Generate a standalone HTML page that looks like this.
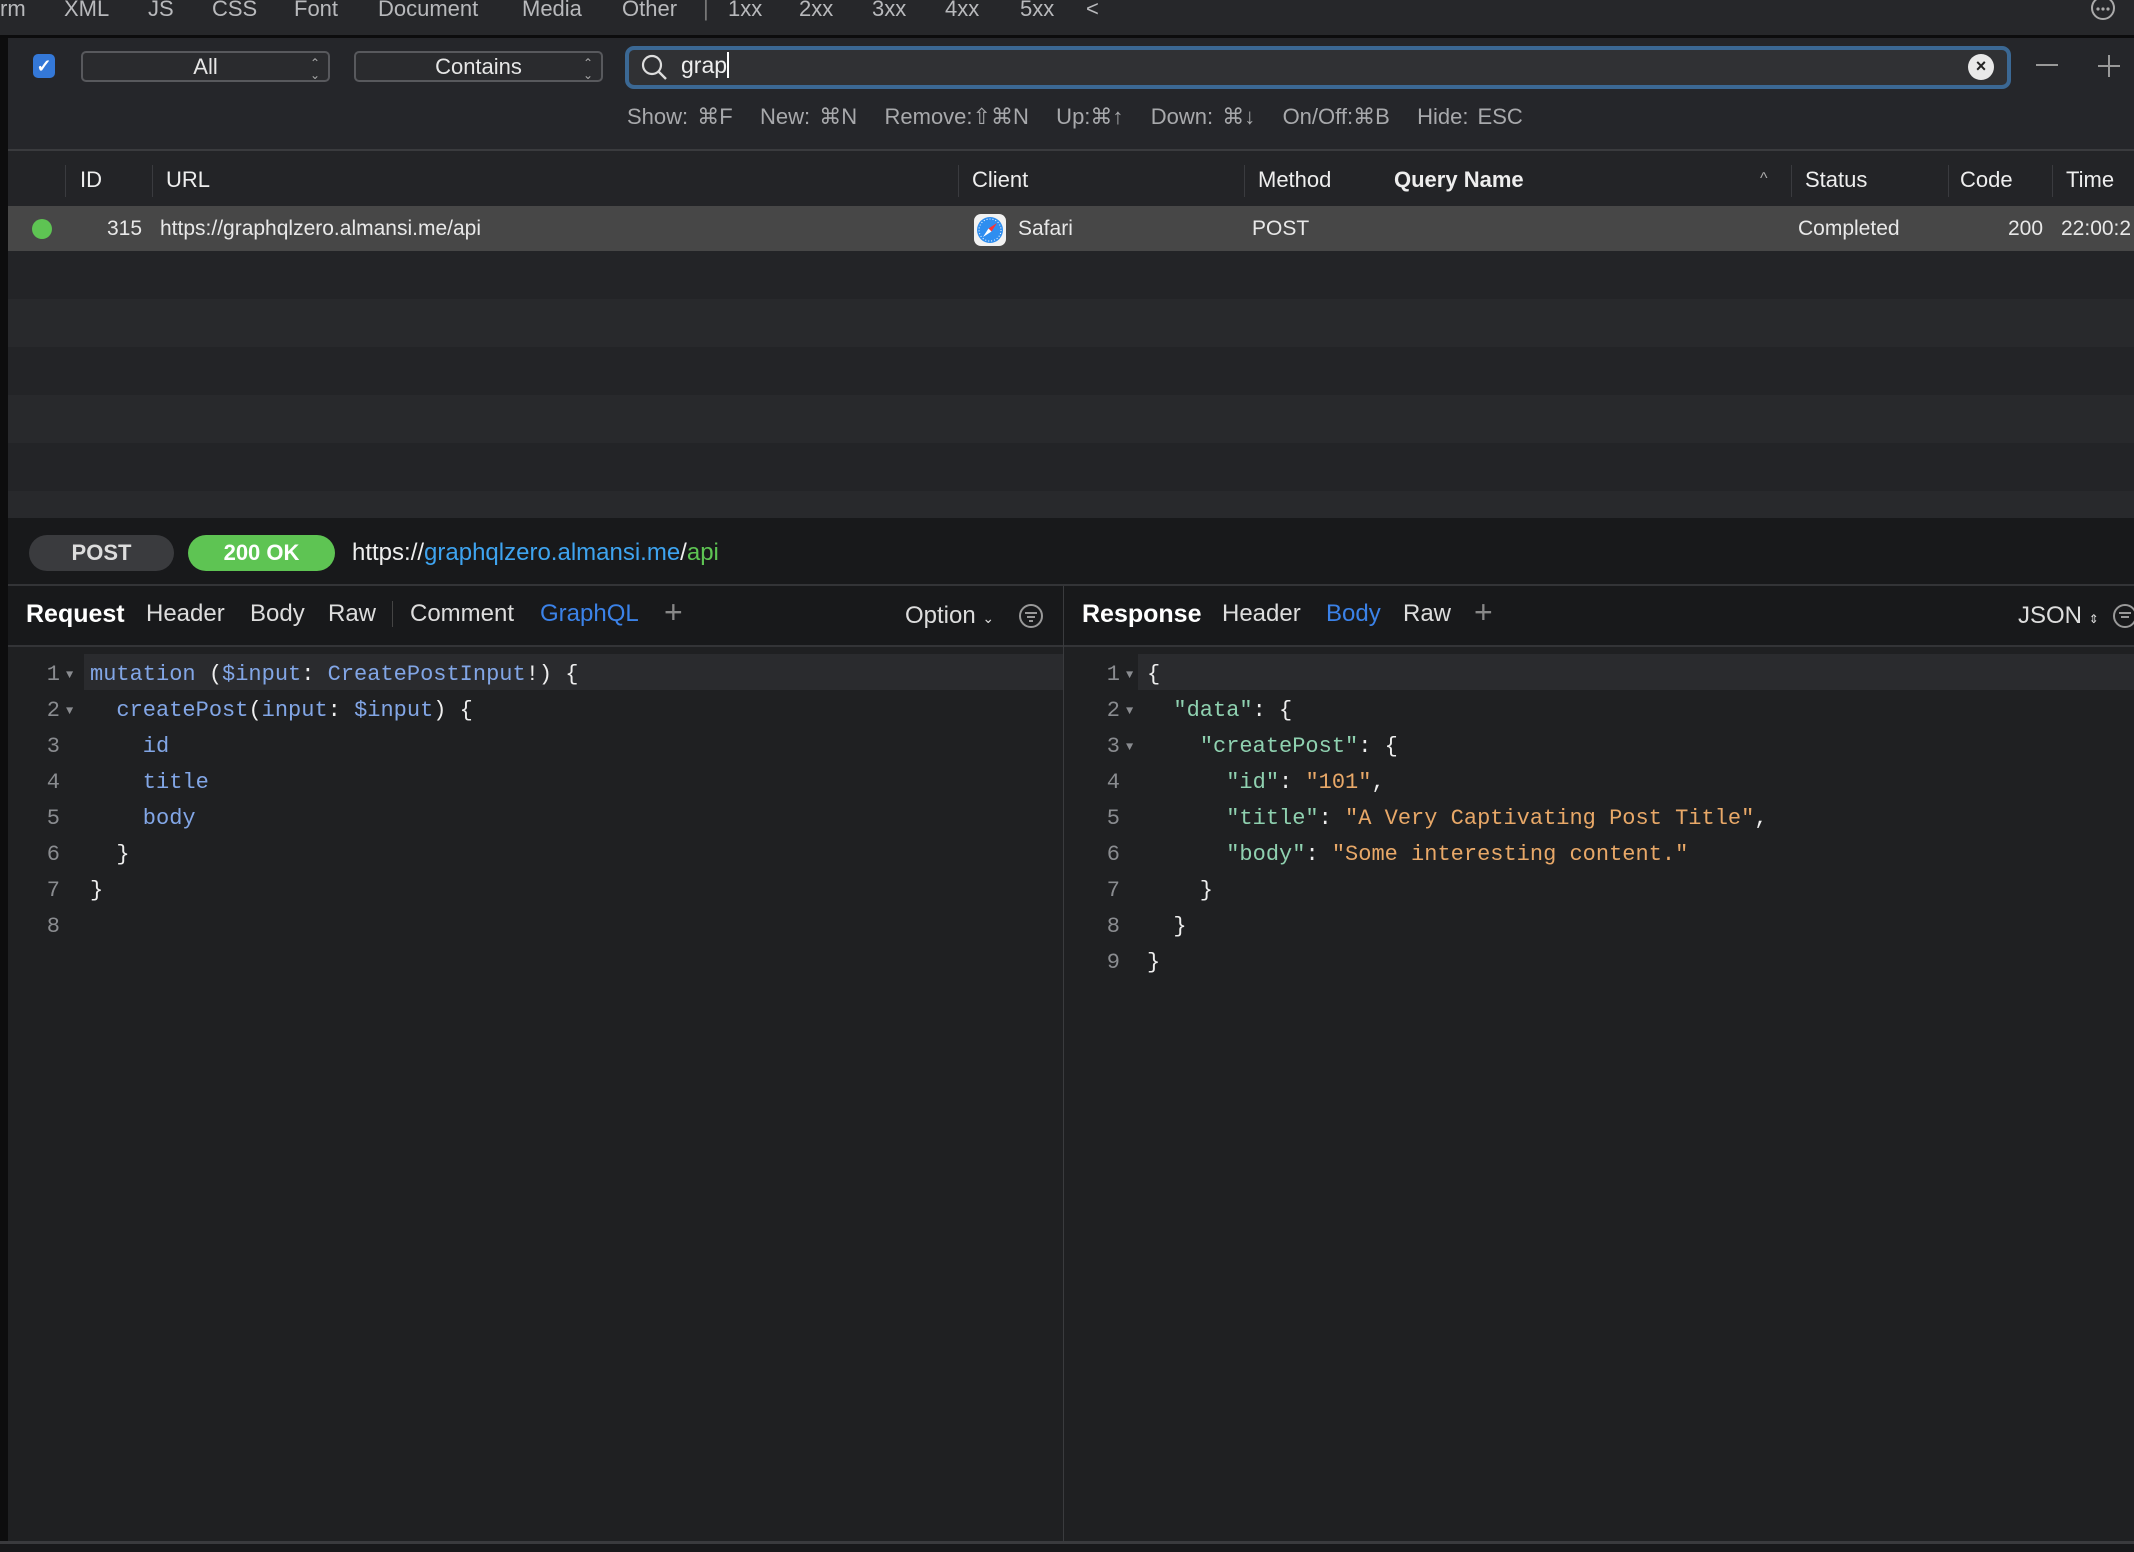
<!DOCTYPE html>
<html><head><meta charset="utf-8"><style>
*{margin:0;padding:0;box-sizing:border-box}
body{width:2134px;height:1552px;background:#232427;font-family:"Liberation Sans",sans-serif;color:#e6e6e6;position:relative;overflow:hidden}
.a{position:absolute;white-space:nowrap}
.mono{font-family:"Liberation Mono","DejaVu Sans Mono",monospace;font-size:22px}
.ln{color:#8a8c90;width:30px;text-align:right}
.tri{color:#8a8c90;font-size:12px}
.vd{position:absolute;width:1px;background:#3a3b3f}
</style></head><body>
<div class="a" style="left:0;top:0;width:2134px;height:36px;background:#26272a"></div>
<div class="a" style="left:0;top:35px;width:2134px;height:3px;background:#0c0c0d"></div>
<div class="a" style="top:-4px;left:0;font-size:22px;color:#b8b9bc;word-spacing:0">
<span class="a" style="left:0">rm</span><span class="a" style="left:64px">XML</span><span class="a" style="left:148px">JS</span><span class="a" style="left:212px">CSS</span><span class="a" style="left:294px">Font</span><span class="a" style="left:378px">Document</span><span class="a" style="left:522px">Media</span><span class="a" style="left:622px">Other</span><span class="a" style="left:703px;top:0;color:#777">|</span><span class="a" style="left:728px">1xx</span><span class="a" style="left:799px">2xx</span><span class="a" style="left:872px">3xx</span><span class="a" style="left:945px">4xx</span><span class="a" style="left:1020px">5xx</span><span class="a" style="left:1086px">&lt;</span></div>
<svg class="a" style="left:2090px;top:-2px" width="26" height="24"><circle cx="13" cy="10" r="11" fill="none" stroke="#aaa" stroke-width="2"/><circle cx="8" cy="11" r="1.6" fill="#aaa"/><circle cx="13" cy="11" r="1.6" fill="#aaa"/><circle cx="18" cy="11" r="1.6" fill="#aaa"/></svg>
<div class="a" style="left:0;top:38px;width:8px;height:1514px;background:#0d0d0e"></div>
<div class="a" style="left:8px;top:38px;width:2126px;height:112px;background:#25262a"></div>
<div class="a" style="left:33px;top:54px;width:22px;height:24px;border-radius:5px;background:#3478d8;color:#fff;font-size:18px;text-align:center;line-height:24px;font-weight:bold">✓</div>
<div class="a" style="left:81px;top:51px;width:249px;height:31px;border:2px solid #58595d;border-radius:5px;background:#2a2b2e;font-size:22px;text-align:center;line-height:27px">All<span class="a" style="right:8px;font-size:12px;color:#aaa;line-height:12px;top:4px">⌃<br>⌄</span></div>
<div class="a" style="left:354px;top:51px;width:249px;height:31px;border:2px solid #58595d;border-radius:5px;background:#2a2b2e;font-size:22px;text-align:center;line-height:27px">Contains<span class="a" style="right:8px;font-size:12px;color:#aaa;line-height:12px;top:4px">⌃<br>⌄</span></div>
<div class="a" style="left:625px;top:46px;width:1386px;height:43px;border:4px solid #3b6894;border-radius:9px;background:#303134"></div>
<svg class="a" style="left:640px;top:53px" width="28" height="28"><circle cx="12" cy="12" r="9" fill="none" stroke="#ddd" stroke-width="2.2"/><line x1="18.5" y1="18.5" x2="26" y2="26" stroke="#ddd" stroke-width="2.4"/></svg>
<div class="a" style="left:681px;top:52px;font-size:23px;color:#eee">grap<span style="display:inline-block;width:2px;height:26px;background:#fff;vertical-align:-5px"></span></div>
<div class="a" style="left:1968px;top:54px;width:26px;height:26px;border-radius:13px;background:#e8e8e8;color:#222;font-size:18px;text-align:center;line-height:25px;font-weight:bold">×</div>
<div class="a" style="left:2036px;top:64px;width:22px;height:2px;background:#999"></div>
<div class="a" style="left:2098px;top:65px;width:22px;height:2px;background:#999"></div><div class="a" style="left:2108px;top:55px;width:2px;height:22px;background:#999"></div>
<div class="a" style="left:627px;top:104px;font-size:22px;color:#a8a9ac;word-spacing:3px">Show: ⌘F &nbsp;&nbsp;New: ⌘N &nbsp;&nbsp;Remove:⇧⌘N &nbsp;&nbsp;Up:⌘↑ &nbsp;&nbsp;Down: ⌘↓ &nbsp;&nbsp;On/Off:⌘B &nbsp;&nbsp;Hide: ESC</div>
<div class="a" style="left:8px;top:149px;width:2126px;height:2px;background:#3a3b3e"></div>
<div class="a" style="left:8px;top:151px;width:2126px;height:55px;background:#232427"></div>
<div class="vd" style="left:65px;top:165px;height:32px"></div><div class="vd" style="left:152px;top:165px;height:32px"></div><div class="vd" style="left:958px;top:165px;height:32px"></div><div class="vd" style="left:1244px;top:165px;height:32px"></div><div class="vd" style="left:1791px;top:165px;height:32px"></div><div class="vd" style="left:1948px;top:165px;height:32px"></div><div class="vd" style="left:2052px;top:165px;height:32px"></div>
<div style="font-size:22px;color:#eee">
<span class="a" style="left:80px;top:167px">ID</span><span class="a" style="left:166px;top:167px">URL</span><span class="a" style="left:972px;top:167px">Client</span><span class="a" style="left:1258px;top:167px">Method</span><span class="a" style="left:1394px;top:167px;font-weight:bold">Query Name</span><span class="a" style="left:1760px;top:170px;font-size:16px;color:#aaa">^</span><span class="a" style="left:1805px;top:167px">Status</span><span class="a" style="left:1960px;top:167px">Code</span><span class="a" style="left:2066px;top:167px">Time</span></div>
<div class="a" style="left:8px;top:206px;width:2126px;height:45px;background:#474747"></div>
<div class="a" style="left:32px;top:219px;width:20px;height:20px;border-radius:10px;background:#5ec453"></div>
<div style="font-size:21px;color:#e8e8e8">
<span class="a" style="left:107px;top:217px">315</span><span class="a" style="left:160px;top:217px">https://graphqlzero.almansi.me/api</span><span class="a" style="left:1018px;top:217px">Safari</span><span class="a" style="left:1252px;top:217px">POST</span><span class="a" style="left:1798px;top:217px">Completed</span><span class="a" style="left:2008px;top:217px">200</span><span class="a" style="left:2061px;top:217px">22:00:2</span></div>
<svg class="a" style="left:973px;top:213px" width="34" height="34"><rect x="1" y="1" width="32" height="32" rx="7" fill="#f2f2f2"/><circle cx="17" cy="17" r="13" fill="#2f8ef0"/><circle cx="17" cy="17" r="11" fill="none" stroke="#fff" stroke-width="1" stroke-dasharray="1 2"/><polygon points="24,10 18.5,18.5 15.5,15.5" fill="#f33"/><polygon points="10,24 15.5,15.5 18.5,18.5" fill="#fff"/></svg>
<div class="a" style="left:8px;top:251px;width:2126px;height:48px;background:#232427"></div>
<div class="a" style="left:8px;top:299px;width:2126px;height:48px;background:#28292c"></div>
<div class="a" style="left:8px;top:347px;width:2126px;height:48px;background:#232427"></div>
<div class="a" style="left:8px;top:395px;width:2126px;height:48px;background:#28292c"></div>
<div class="a" style="left:8px;top:443px;width:2126px;height:48px;background:#232427"></div>
<div class="a" style="left:8px;top:491px;width:2126px;height:27px;background:#28292c"></div>
<div class="a" style="left:8px;top:518px;width:2126px;height:67px;background:#18191b"></div>
<div class="a" style="left:29px;top:535px;width:145px;height:36px;border-radius:18px;background:#3a3b3e;font-size:22px;font-weight:bold;text-align:center;line-height:36px;color:#ddd">POST</div>
<div class="a" style="left:188px;top:535px;width:147px;height:36px;border-radius:18px;background:#5ec453;font-size:22px;font-weight:bold;text-align:center;line-height:36px;color:#fff">200 OK</div>
<div class="a" style="left:352px;top:539px;font-size:24px;color:#eee">https://<span style="color:#3ea4f0">graphqlzero.almansi.me</span>/<span style="color:#5ec453">api</span></div>
<div class="a" style="left:8px;top:584px;width:2126px;height:2px;background:#333437"></div>
<div class="a" style="left:8px;top:586px;width:2126px;height:60px;background:#18191b"></div>
<div style="font-size:24px;color:#ddd">
<span class="a" style="left:26px;top:600px;font-weight:bold;color:#fff;font-size:25px">Request</span><span class="a" style="left:146px;top:600px">Header</span><span class="a" style="left:250px;top:600px">Body</span><span class="a" style="left:328px;top:600px">Raw</span><span class="a" style="left:392px;top:601px;width:1px;height:26px;background:#444"></span><span class="a" style="left:410px;top:600px">Comment</span><span class="a" style="left:540px;top:600px;color:#3b82e8">GraphQL</span><span class="a" style="left:664px;top:594px;font-size:32px;color:#888">+</span>
<span class="a" style="left:905px;top:602px">Option <span style="font-size:14px">⌄</span></span>
<span class="a" style="left:1082px;top:600px;font-weight:bold;color:#fff;font-size:25px">Response</span><span class="a" style="left:1222px;top:600px">Header</span><span class="a" style="left:1326px;top:600px;color:#3b82e8">Body</span><span class="a" style="left:1403px;top:600px">Raw</span><span class="a" style="left:1474px;top:594px;font-size:32px;color:#888">+</span>
<span class="a" style="left:2018px;top:602px">JSON <span style="font-size:12px">⇕</span></span></div>
<svg class="a" style="left:1018px;top:603px" width="26" height="26"><circle cx="13" cy="13" r="11" fill="none" stroke="#999" stroke-width="2"/><line x1="7" y1="10" x2="19" y2="10" stroke="#999" stroke-width="2"/><line x1="9" y1="14" x2="17" y2="14" stroke="#999" stroke-width="2"/><line x1="11" y1="18" x2="15" y2="18" stroke="#999" stroke-width="2"/></svg>
<svg class="a" style="left:2112px;top:603px" width="26" height="26"><circle cx="13" cy="13" r="11" fill="none" stroke="#999" stroke-width="2"/><line x1="7" y1="10" x2="19" y2="10" stroke="#999" stroke-width="2"/><line x1="9" y1="14" x2="17" y2="14" stroke="#999" stroke-width="2"/></svg>
<div class="a" style="left:8px;top:645px;width:2126px;height:2px;background:#333437"></div>
<div class="a" style="left:8px;top:647px;width:2126px;height:895px;background:#1f2022"></div>
<div class="a" style="left:1063px;top:586px;width:1px;height:956px;background:#3a3b3e"></div>
<div class="a" style="left:84px;top:654px;width:979px;height:36px;background:#2a2b2e"></div>
<div class="a" style="left:1138px;top:654px;width:996px;height:36px;background:#2a2b2e"></div>
<div class="a" style="left:0;top:1541px;width:2134px;height:3px;background:#3a3a3d"></div>
<div class="a" style="left:0;top:1544px;width:2134px;height:8px;background:#18181a"></div>
<div class="a mono" style="left:0;top:657px;line-height:36px;color:#eee">
<div style="position:relative;height:36px"><span class="a ln" style="left:30px">1</span><span class="a tri" style="left:66px">▼</span><span class="a" style="left:90px"><span style="color:#82a6e6">mutation</span> (<span style="color:#82a6e6">$input</span>: <span style="color:#82a6e6">CreatePostInput</span>!) {</span></div>
<div style="position:relative;height:36px"><span class="a ln" style="left:30px">2</span><span class="a tri" style="left:66px">▼</span><span class="a" style="left:90px">  <span style="color:#82a6e6">createPost</span>(<span style="color:#82a6e6">input</span>: <span style="color:#82a6e6">$input</span>) {</span></div>
<div style="position:relative;height:36px"><span class="a ln" style="left:30px">3</span><span class="a" style="left:90px;color:#82a6e6">    id</span></div>
<div style="position:relative;height:36px"><span class="a ln" style="left:30px">4</span><span class="a" style="left:90px;color:#82a6e6">    title</span></div>
<div style="position:relative;height:36px"><span class="a ln" style="left:30px">5</span><span class="a" style="left:90px;color:#82a6e6">    body</span></div>
<div style="position:relative;height:36px"><span class="a ln" style="left:30px">6</span><span class="a" style="left:90px">  }</span></div>
<div style="position:relative;height:36px"><span class="a ln" style="left:30px">7</span><span class="a" style="left:90px">}</span></div>
<div style="position:relative;height:36px"><span class="a ln" style="left:30px">8</span></div>
</div>
<div class="a mono" style="left:1084px;top:657px;line-height:36px;color:#eee">
<div style="position:relative;height:36px"><span class="a ln" style="left:6px">1</span><span class="a tri" style="left:42px">▼</span><span class="a" style="left:63px">{</span></div>
<div style="position:relative;height:36px"><span class="a ln" style="left:6px">2</span><span class="a tri" style="left:42px">▼</span><span class="a" style="left:63px">  <span style="color:#8fd1b0">"data"</span>: {</span></div>
<div style="position:relative;height:36px"><span class="a ln" style="left:6px">3</span><span class="a tri" style="left:42px">▼</span><span class="a" style="left:63px">    <span style="color:#8fd1b0">"createPost"</span>: {</span></div>
<div style="position:relative;height:36px"><span class="a ln" style="left:6px">4</span><span class="a" style="left:63px">      <span style="color:#8fd1b0">"id"</span>: <span style="color:#e8a868">"101"</span>,</span></div>
<div style="position:relative;height:36px"><span class="a ln" style="left:6px">5</span><span class="a" style="left:63px">      <span style="color:#8fd1b0">"title"</span>: <span style="color:#e8a868">"A Very Captivating Post Title"</span>,</span></div>
<div style="position:relative;height:36px"><span class="a ln" style="left:6px">6</span><span class="a" style="left:63px">      <span style="color:#8fd1b0">"body"</span>: <span style="color:#e8a868">"Some interesting content."</span></span></div>
<div style="position:relative;height:36px"><span class="a ln" style="left:6px">7</span><span class="a" style="left:63px">    }</span></div>
<div style="position:relative;height:36px"><span class="a ln" style="left:6px">8</span><span class="a" style="left:63px">  }</span></div>
<div style="position:relative;height:36px"><span class="a ln" style="left:6px">9</span><span class="a" style="left:63px">}</span></div>
</div>
<style>.mono .a{white-space:pre}</style>
</body></html>
